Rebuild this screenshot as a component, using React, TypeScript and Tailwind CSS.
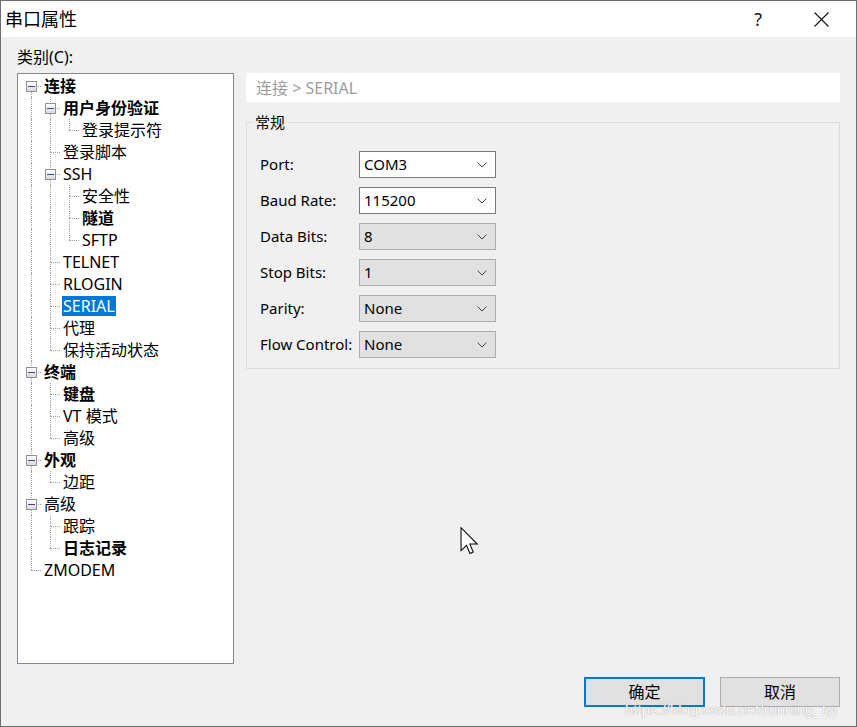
import React from 'react';

type Node = { t: string; b?: boolean; sel?: boolean; c?: Node[] };

const tree: Node[] = [
  {
    t: '连接',
    b: true,
    c: [
      { t: '用户身份验证', b: true, c: [{ t: '登录提示符' }] },
      { t: '登录脚本' },
      { t: 'SSH', c: [{ t: '安全性' }, { t: '隧道', b: true }, { t: 'SFTP' }] },
      { t: 'TELNET' },
      { t: 'RLOGIN' },
      { t: 'SERIAL', sel: true },
      { t: '代理' },
      { t: '保持活动状态' },
    ],
  },
  { t: '终端', b: true, c: [{ t: '键盘', b: true }, { t: 'VT 模式' }, { t: '高级' }] },
  { t: '外观', b: true, c: [{ t: '边距' }] },
  { t: '高级', c: [{ t: '跟踪' }, { t: '日志记录', b: true }] },
  { t: 'ZMODEM' },
];

type Row = { node: Node; guides: boolean[]; first: boolean; hasNext: boolean };

function flatten(nodes: Node[], guides: boolean[], out: Row[], root: boolean) {
  nodes.forEach((n, i) => {
    const hasNext = i < nodes.length - 1;
    out.push({ node: n, guides, first: root && i === 0, hasNext });
    if (n.c) flatten(n.c, [...guides, hasNext], out, false);
  });
  return out;
}

const rows = flatten(tree, [], [], true);

function TreeRow({ row }: { row: Row }) {
  const { node, guides, first, hasNext } = row;
  return (
    <div className="flex h-[22px] items-center">
      {guides.map((g, i) => (
        <div key={i} className="relative h-full w-[19px] shrink-0">
          {g && <div className="absolute left-[9px] top-0 bottom-0 border-l border-dotted border-[#a0a0a0]" />}
        </div>
      ))}
      <div className="relative h-full w-[19px] shrink-0">
        {!first && <div className="absolute left-[9px] top-0 h-[11px] border-l border-dotted border-[#a0a0a0]" />}
        {hasNext && <div className="absolute left-[9px] top-[11px] bottom-0 border-l border-dotted border-[#a0a0a0]" />}
        <div className="absolute left-[9px] right-0 top-[11px] border-t border-dotted border-[#a0a0a0]" />
        {node.c && (
          <div className="absolute left-[4px] top-[6px] flex h-[11px] w-[11px] items-center justify-center border border-[#919191] bg-gradient-to-b from-white to-[#dadada]">
            <div className="h-[1px] w-[7px] bg-[#3a4a8f]" />
          </div>
        )}
      </div>
      <span
        className={
          'ml-[2px] whitespace-nowrap px-[1px] leading-[20px] ' +
          (node.b ? 'font-bold ' : '') +
          (node.sel ? 'bg-[#0078d7] text-white' : 'text-black')
        }
      >
        {node.t}
      </span>
    </div>
  );
}

function Combo({ value, editable }: { value: string; editable?: boolean }) {
  return (
    <div
      className={
        'flex h-[27px] w-[137px] items-center justify-between pl-[4px] pr-[8px] ' +
        (editable ? 'border border-[#7a7a7a] bg-white' : 'border border-[#adadad] bg-[#e1e1e1]')
      }
    >
      <span className="text-[15px] text-black">{value}</span>
      <svg width="10" height="6" viewBox="0 0 10 6" fill="none">
        <path d="M0.5 0.5 L5 5 L9.5 0.5" stroke="#444" strokeWidth="1" />
      </svg>
    </div>
  );
}

const fields: { label: string; value: string; editable?: boolean }[] = [
  { label: 'Port:', value: 'COM3', editable: true },
  { label: 'Baud Rate:', value: '115200', editable: true },
  { label: 'Data Bits:', value: '8' },
  { label: 'Stop Bits:', value: '1' },
  { label: 'Parity:', value: 'None' },
  { label: 'Flow Control:', value: 'None' },
];

export default function App() {
  return (
    <div
      className="relative flex h-[727px] w-[857px] flex-col overflow-hidden border border-[#6e6e6e] bg-[#f0f0f0] text-black"
      style={{ fontFamily: '"Noto Sans", "Noto Sans CJK SC", sans-serif' }}
    >
      {/* title bar */}
      <div className="flex h-[36px] shrink-0 items-center bg-white pl-[4px]">
        <span className="text-[18px]">串口属性</span>
        <span className="ml-auto mr-[52px] text-[18px] text-[#222]">?</span>
        <svg className="mr-[27px]" width="15" height="15" viewBox="0 0 15 15">
          <path d="M0.5 0.5 L14.5 14.5 M14.5 0.5 L0.5 14.5" stroke="#111" strokeWidth="1.1" />
        </svg>
      </div>

      <div className="flex flex-1 flex-col pl-[16px] pr-[16px]">
        <div className="mt-[9px] text-[16px] leading-[22px]">类别(C):</div>

        <div className="mt-[5px] flex h-[591px] gap-[12px]">
          {/* tree */}
          <div className="w-[217px] shrink-0 border border-[#828790] bg-white pl-[4px] pt-[1px] text-[16px]">
            {rows.map((r, i) => (
              <TreeRow key={i} row={r} />
            ))}
          </div>

          {/* right panel */}
          <div className="flex w-[594px] flex-col">
            <div className="flex h-[29px] items-center bg-white pl-[10px] text-[16px] text-[#9c9c9c]">
              连接 &gt; SERIAL
            </div>
            <div className="relative mt-[20px] flex h-[247px] flex-col gap-[9px] border border-[#dcdcdc] pl-[13px] pt-[28px]">
              <span className="absolute left-[6px] top-[-12px] bg-[#f0f0f0] px-[2px] text-[15px] leading-[22px]">常规</span>
              {fields.map((f) => (
                <div key={f.label} className="flex items-center">
                  <span className="w-[99px] text-[15px]">{f.label}</span>
                  <Combo value={f.value} editable={f.editable} />
                </div>
              ))}
            </div>
          </div>
        </div>

        <div className="mt-[13px] flex justify-end gap-[15px]">
          <button className="flex h-[30px] w-[121px] items-center justify-center border-2 border-[#0078d7] bg-[#e1e1e1] text-[16px]">
            确定
          </button>
          <button className="flex h-[30px] w-[120px] items-center justify-center border border-[#adadad] bg-[#e1e1e1] text-[16px]">
            取消
          </button>
        </div>
      </div>

      {/* watermark */}
      <div
        className="pointer-events-none absolute left-[624px] top-[698px] text-[15px] text-white [text-shadow:0_0_1px_#7a7a7a]"
        style={{ fontFamily: '"Liberation Sans", sans-serif' }}
      >
        https://blog.csdn.net/running_tyj
      </div>

      {/* mouse cursor */}
      <svg className="absolute left-[459px] top-[526px]" width="19" height="28" viewBox="0 0 12.5 19">
        <path d="M0.5 0.5 L0.5 16 L4.2 12.4 L6.6 18 L8.8 17 L6.5 11.6 L11.5 11.6 Z" fill="white" stroke="black" strokeWidth="0.7" strokeLinejoin="miter" />
      </svg>
    </div>
  );
}
